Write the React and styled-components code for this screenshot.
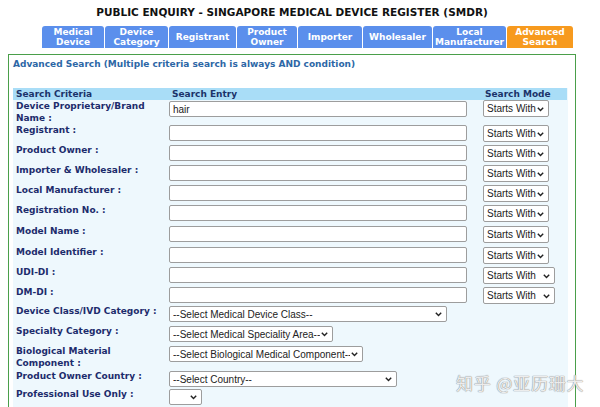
import React from "react";
import styled, { createGlobalStyle } from "styled-components";

const GlobalStyle = createGlobalStyle`
  html, body {
    margin: 0;
    padding: 0;
    background: #ffffff;
    font-family: "DejaVu Sans", Verdana, sans-serif;
  }
`;

const Page = styled.div`
  position: relative;
  width: 600px;
  height: 407px;
  overflow: hidden;
  padding-left: 8px;
  box-sizing: border-box;
`;

const Container = styled.div`
  width: 568px;
`;

const Title = styled.h1`
  margin: 0;
  padding-top: 5px;
  height: 15px;
  line-height: 14px;
  font-size: 10.5px;
  font-weight: bold;
  text-align: center;
  color: #111111;
`;

const TabBar = styled.div`
  display: flex;
  gap: 1px;
  margin-top: 6px;
  padding-left: 34px;
  height: 22px;
`;

const Tab = styled.div`
  width: ${(p) => p.w}px;
  height: 22px;
  background: ${(p) => (p.active ? "#f79a1e" : "#5b8fec")};
  border-radius: 3px 3px 0 0;
  color: #ffffff;
  font-size: 9px;
  font-weight: bold;
  line-height: 10.5px;
  text-align: center;
  display: flex;
  align-items: center;
  justify-content: center;
  white-space: pre-line;
`;

const Panel = styled.div`
  margin-top: 6px;
  border: 1px solid #4a9f4a;
  border-bottom: none;
  padding: 3px 7px 0 4px;
  height: 400px;
`;

const Description = styled.div`
  color: #2d67a6;
  font-size: 9px;
  font-weight: bold;
  line-height: 12px;
  margin-bottom: 18px;
`;

const Table = styled.div`
  display: grid;
  grid-template-columns: 156px 313px 85px;
  background: #eef8fd;
  min-height: 330px;
  align-content: start;
`;

const HeaderCell = styled.div`
  background: #a9ddf7;
  color: #1b336a;
  font-size: 9px;
  font-weight: bold;
  line-height: 12px;
  height: 12px;
  padding-left: 3px;
`;

const Label = styled.div`
  height: ${(p) => p.h}px;
  padding: 1px 0 0 3px;
  box-sizing: border-box;
  color: #1d2c6c;
  font-size: 9px;
  font-weight: bold;
  line-height: 11.5px;
`;

const Cell = styled.div`
  display: flex;
  align-items: flex-start;
  height: ${(p) => p.h}px;
  padding-top: ${(p) => p.top}px;
  padding-left: ${(p) => p.left || 0}px;
  box-sizing: border-box;
  grid-column: ${(p) => (p.span ? "span 2" : "auto")};
`;

const TextInput = styled.input`
  display: block;
  width: 298px;
  height: 16px;
  margin: 0;
  box-sizing: border-box;
  border: 1px solid #9d9d9d;
  border-radius: 2px;
  padding: 0 3px;
  font-family: "Liberation Sans", Arial, sans-serif;
  font-size: 10px;
  color: #222222;
  background: #ffffff;
  outline: none;
`;

const SelectWrap = styled.span`
  position: relative;
  display: inline-block;
  width: ${(p) => p.w}px;
  height: ${(p) => p.h || 16}px;
`;

const NativeSelect = styled.select`
  display: block;
  appearance: none;
  -webkit-appearance: none;
  width: 100%;
  height: 100%;
  margin: 0;
  box-sizing: border-box;
  border: 1px solid #9d9d9d;
  border-radius: 2px;
  padding: 0 12px 0 3px;
  font-family: "Liberation Sans", Arial, sans-serif;
  font-size: 10px;
  color: #222222;
  background: #ffffff;
  outline: none;
`;

const Chevron = styled.svg`
  position: absolute;
  right: 5px;
  top: 50%;
  margin-top: -2px;
  pointer-events: none;
`;

const SelectBox = ({ w, h, text }) => (
  <SelectWrap w={w} h={h}>
    <NativeSelect>
      <option>{text}</option>
    </NativeSelect>
    <Chevron width="7" height="5" viewBox="0 0 7 5">
      <path d="M0.8 0.8 L3.5 3.6 L6.2 0.8" fill="none" stroke="#222" strokeWidth="1.4" />
    </Chevron>
  </SelectWrap>
);

const Watermark = styled.div`
  position: absolute;
  left: 456px;
  top: 370px;
  font-family: "Noto Sans CJK SC", sans-serif;
  font-size: 17px;
  color: rgba(255, 255, 255, 0.85);
  text-shadow: 0 0 1px #8a8a8a, 0 0 1px #8a8a8a;
  letter-spacing: 0.8px;
  pointer-events: none;
`;

const tabs = [
  ["Medical\nDevice", 62],
  ["Device\nCategory", 63],
  ["Registrant", 67],
  ["Product\nOwner", 60],
  ["Importer", 64],
  ["Wholesaler", 69],
  ["Local\nManufacturer", 73],
  ["Advanced\nSearch", 66, true],
];

const textRows = [
  ["Device Proprietary/Brand Name :", 24, "hair", 66, true],
  ["Registrant :", 20, "", 66],
  ["Product Owner :", 20, "", 66],
  ["Importer & Wholesaler :", 20, "", 66],
  ["Local Manufacturer :", 20, "", 66],
  ["Registration No. :", 21, "", 66],
  ["Model Name :", 21, "", 66],
  ["Model Identifier :", 20, "", 66],
  ["UDI-DI :", 20, "", 72],
  ["DM-DI :", 19, "", 72],
];

const selectRows = [
  ["Device Class/IVD Category :", 20, "--Select Medical Device Class--", 278],
  ["Specialty Category :", 20, "--Select Medical Speciality Area--", 164],
  ["Biological Material Component :", 25, "--Select Biological Medical Component--", 194],
  ["Product Owner Country :", 18, "--Select Country--", 228],
  ["Professional Use Only :", 20, "", 33],
];

export default function App() {
  return (
    <Page>
      <GlobalStyle />
      <Container>
        <Title>PUBLIC ENQUIRY - SINGAPORE MEDICAL DEVICE REGISTER (SMDR)</Title>
        <TabBar>
          {tabs.map(([label, w, active]) => (
            <Tab key={label} w={w} active={active}>
              {label}
            </Tab>
          ))}
        </TabBar>
        <Panel>
          <Description>
            Advanced Search (Multiple criteria search is always AND condition)
          </Description>
          <Table>
            <HeaderCell>Search Criteria</HeaderCell>
            <HeaderCell>Search Entry</HeaderCell>
            <HeaderCell>Search Mode</HeaderCell>

            {textRows.map(([label, h, value, modeW, first]) => (
              <React.Fragment key={label}>
                <Label h={h}>{label}</Label>
                <Cell h={h} top={1}>
                  <TextInput defaultValue={value} />
                </Cell>
                <Cell h={h} top={first ? 0 : 1} left={1}>
                  <SelectBox w={modeW} h={17} text="Starts With" />
                </Cell>
              </React.Fragment>
            ))}

            {selectRows.map(([label, h, text, w]) => (
              <React.Fragment key={label}>
                <Label h={h}>{label}</Label>
                <Cell h={h} top={1} span>
                  <SelectBox w={w} text={text} />
                </Cell>
              </React.Fragment>
            ))}
          </Table>
        </Panel>
      </Container>
      <Watermark>知乎 @亚历珊大</Watermark>
    </Page>
  );
}
